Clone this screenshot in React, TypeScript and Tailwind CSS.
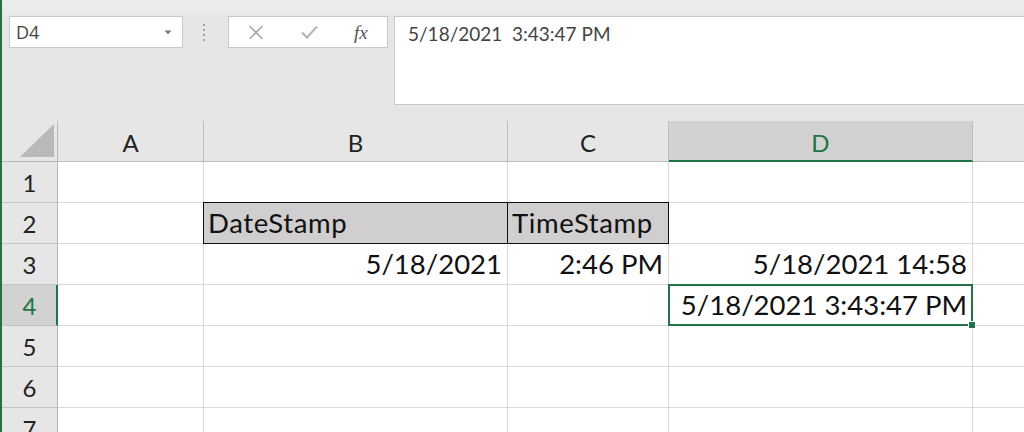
import React from "react";

const cellFont = { fontFamily: "Lato, 'Open Sans', sans-serif" };

function Cell({
  w,
  children,
  align = "left",
  extra = "",
}: {
  w: string;
  children?: React.ReactNode;
  align?: "left" | "right" | "center";
  extra?: string;
}) {
  const j = align === "right" ? "justify-end pr-[5px]" : align === "center" ? "justify-center" : "justify-start pl-[4px]";
  return (
    <div className={`${w} relative h-full shrink-0 border-r border-b border-[#dadada] bg-white flex items-center ${j} ${extra}`}>
      {children}
    </div>
  );
}

export default function App() {
  const rows = [1, 2, 3, 4, 5, 6, 7];
  return (
    <div
      className="w-[1024px] h-[432px] overflow-hidden bg-[#e6e6e6] flex"
      style={{ fontFamily: "'Open Sans', sans-serif" }}
    >
      <div className="w-[2px] h-full bg-[#217346] shrink-0" />
      <div className="flex-1 flex flex-col min-w-0">
        {/* Toolbar */}
        <div className="h-[121px] shrink-0 flex items-start pt-[16px] bg-gradient-to-b from-[#eeeeee] from-0% to-[#e6e6e6] to-15%">
          <div className="ml-[7px] w-[174px] h-[32px] bg-white border border-[#c8c8c8] flex items-center pl-[6px] pr-[10px] justify-between">
            <span className="text-[18px] text-[#444] leading-none">D4</span>
            <svg width="8" height="5" viewBox="0 0 8 5">
              <path d="M0.5 0.5 L7.5 0.5 L4 4.5 Z" fill="#7a7a7a" />
            </svg>
          </div>
          <div className="ml-[19px] h-[32px] flex flex-col items-center justify-center gap-[3px] w-[4px]">
            <div className="w-[2px] h-[2px] bg-[#a0a0a0]" />
            <div className="w-[2px] h-[2px] bg-[#a0a0a0]" />
            <div className="w-[2px] h-[2px] bg-[#a0a0a0]" />
            <div className="w-[2px] h-[2px] bg-[#a0a0a0]" />
          </div>
          <div className="ml-[22px] w-[160px] h-[32px] bg-white border border-[#c8c8c8] flex items-center">
            <svg className="ml-[19px]" width="16" height="15" viewBox="0 0 16 15">
              <path d="M1.5 1 L14.5 14 M14.5 1 L1.5 14" stroke="#a8a8a8" strokeWidth="1.6" fill="none" />
            </svg>
            <svg className="ml-[37px]" width="17" height="14" viewBox="0 0 17 14">
              <path d="M1 7.5 L6 12.5 L16 1.5" stroke="#b4b4b4" strokeWidth="2" fill="none" />
            </svg>
            <span
              className="ml-[36px] text-[19px] italic text-[#555] leading-none"
              style={{ fontFamily: "'Liberation Serif', 'DejaVu Serif', serif" }}
            >
              fx
            </span>
          </div>
          <div className="ml-[6px] flex-1 h-[89px] bg-white border border-[#c8c8c8] border-r-0 pl-[13px] pt-[3px]">
            <span className="text-[19px] text-[#444] whitespace-pre" style={cellFont}>
              5/18/2021  3:43:47 PM
            </span>
          </div>
        </div>

        {/* Grid */}
        <div className="flex-1 flex flex-col" style={cellFont}>
          {/* Column header */}
          <div className="h-[41px] shrink-0 flex text-[24px] text-[#222]">
            <div className="w-[56px] h-full shrink-0 border-r border-b border-[#b8b8b8] bg-[#e6e6e6] flex items-end justify-end pr-[2px] pb-[3px]">
              <svg width="36" height="34" viewBox="0 0 36 34">
                <path d="M35 0 L35 33 L1 33 Z" fill="#b9b9b9" />
              </svg>
            </div>
            {[
              ["A", "w-[146px]"],
              ["B", "w-[304px]"],
              ["C", "w-[161px]"],
            ].map(([l, w]) => (
              <div key={l} className={`${w} h-full shrink-0 border-r border-b border-[#bdbdbd] bg-[#e6e6e6] flex items-center justify-center pt-[3px]`}>
                {l}
              </div>
            ))}
            <div className="w-[304px] h-full shrink-0 border-r border-[#bdbdbd] border-b-2 border-b-[#217346] bg-[#d2d2d2] text-[#217346] flex items-center justify-center pt-[4px]">
              D
            </div>
            <div className="flex-1 h-full border-b border-[#bdbdbd] bg-[#e6e6e6]" />
          </div>

          {rows.map((r) => (
            <div key={r} className="h-[41px] shrink-0 flex text-[27.5px] text-[#111]">
              <div
                className={`w-[56px] h-full shrink-0 border-b border-[#c4c4c4] flex items-center justify-center pt-[2px] text-[24px] ${
                  r === 4
                    ? "bg-[#d2d2d2] text-[#217346] border-r-2 border-r-[#217346] pl-[1px]"
                    : "bg-[#e6e6e6] text-[#222] border-r border-r-[#b8b8b8]"
                }`}
              >
                {r}
              </div>
              <Cell w="w-[146px]" />
              {r === 2 ? (
                <Cell w="w-[304px]" extra="!bg-[#d0cece]">
                  <div className="absolute -inset-[1px] border border-[#111]" />
                  <span className="relative tracking-[0.6px]">DateStamp</span>
                </Cell>
              ) : r === 3 ? (
                <Cell w="w-[304px]" align="right">5/18/2021</Cell>
              ) : (
                <Cell w="w-[304px]" />
              )}
              {r === 2 ? (
                <Cell w="w-[161px]" extra="!bg-[#d0cece]">
                  <div className="absolute -inset-[1px] border border-[#111]" />
                  <span className="relative tracking-[0.6px]">TimeStamp</span>
                </Cell>
              ) : r === 3 ? (
                <Cell w="w-[161px]" align="right">2:46 PM</Cell>
              ) : (
                <Cell w="w-[161px]" />
              )}
              {r === 3 ? (
                <Cell w="w-[304px]" align="right">5/18/2021 14:58</Cell>
              ) : r === 4 ? (
                <Cell w="w-[304px]" align="right" extra="z-10">
                  <div className="absolute -left-[1px] -top-[1px] -right-[1px] -bottom-[1px] border-2 border-[#217346]" />
                  <div className="absolute -right-[4px] -bottom-[4px] w-[8px] h-[8px] bg-[#217346] border border-white" />
                  <span className="relative">5/18/2021 3:43:47 PM</span>
                </Cell>
              ) : (
                <Cell w="w-[304px]" />
              )}
              <div className="flex-1 h-full border-b border-[#dadada] bg-white" />
            </div>
          ))}
        </div>
      </div>
    </div>
  );
}
